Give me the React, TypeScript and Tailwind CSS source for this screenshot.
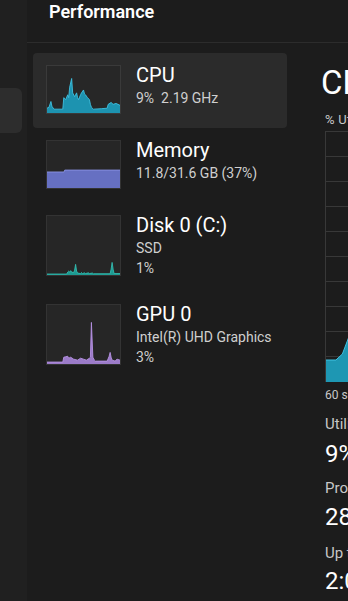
import React from "react";

type Pt = [number, number];

/* ── tiny sparkline used in the left list ───────────────────── */
function Spark({
  h,
  pts,
  fill,
  stroke,
  className,
}: {
  h: number;
  pts: Pt[];
  fill: string;
  stroke: string;
  className: string;
}) {
  const area = [...pts, [74, h] as Pt, [0, h] as Pt].map((p) => p.join(",")).join(" ");
  const line = pts.map((p) => p.join(",")).join(" ");
  return (
    <div className={className}>
      <svg viewBox={`0 0 74 ${h}`} preserveAspectRatio="none" className="block h-full w-full">
        <polygon points={area} fill={fill} />
        <polyline points={line} fill="none" stroke={stroke} strokeWidth="0.9" />
      </svg>
    </div>
  );
}

const CPU_PTS: Pt[] = [
  [0, 44], [2, 43], [4, 37], [5, 42], [7, 45], [16, 45], [17, 33], [19, 35], [21, 30], [22, 33],
  [23, 22], [25, 13], [26, 28], [28, 32], [30, 28], [31, 33], [32, 35], [34, 30], [35, 28], [37, 25],
  [38, 29], [39, 30], [41, 33], [43, 35], [44, 40], [45, 43], [47, 45], [55, 44.5], [61, 44], [62, 40],
  [65, 38], [67, 40], [70, 39], [72, 40], [74, 41],
];

const MEM_PTS: Pt[] = [[0, 32.3], [17.3, 32.3], [18, 30.3], [74, 30.3]];

const DISK_PTS: Pt[] = [
  [0, 60], [20, 60], [21, 58], [22, 57], [23, 58], [24, 56.5], [25, 58], [27, 58.5], [28, 56], [29, 50],
  [30, 57], [31, 59], [34, 59.5], [35, 58.5], [36, 59.5], [38, 58.8], [39, 59.5], [42, 58.8], [43, 59.5],
  [46, 59], [47, 59.7], [64, 59.7], [65, 55], [66, 48], [67, 55], [68, 59.5], [74, 59.5],
];

const GPU_PTS: Pt[] = [
  [0, 59], [16, 59], [17, 54], [19, 53.5], [21, 53], [22, 55], [24, 54], [27, 56], [31, 57], [34, 55],
  [37, 56], [40, 57], [43, 55], [44, 54], [45, 18], [46.5, 54], [48, 57], [49, 58], [61, 58], [63, 53],
  [64, 49], [65, 54], [66, 57], [69, 58], [71, 56], [74, 57],
];

function Label({ title, lines }: { title: string; lines: string[] }) {
  return (
    <div className="min-w-0">
      <div className="text-[20px] leading-none text-white">{title}</div>
      <div className="mt-[3px] text-[14px] leading-[20px] text-[#cfcfcf]">
        {lines.map((l) => (
          <div key={l} className="whitespace-pre">
            {l}
          </div>
        ))}
      </div>
    </div>
  );
}

export default function App() {
  return (
    <div
      className="flex h-[601px] w-[348px] overflow-hidden bg-[#1c1c1c]"
      style={{ fontFamily: "Roboto, 'Open Sans', sans-serif" }}
    >
      {/* nav rail */}
      <aside className="w-[27px] shrink-0 bg-[#202020] pt-[88px]">
        <div className="h-[45px] w-[22px] rounded-r-md bg-[#2d2d2d]" />
      </aside>

      <main className="flex min-w-0 flex-1 flex-col">
        <header className="h-[43px] shrink-0 border-b border-[#2c2c2c] pl-[22px] pt-[3px]">
          <h1 className="text-[18px] font-semibold leading-none text-white">Performance</h1>
        </header>

        <div className="flex">
          {/* device list */}
          <div className="w-[260px] shrink-0 pl-[6px] pt-[10px]">
            <div className="flex w-[254px] gap-[15px] rounded-[4px] bg-[#2b2b2b] pb-[14px] pl-[13px] pt-[12px]">
              <Spark
                h={49}
                pts={CPU_PTS}
                fill="#1d93b0"
                stroke="#3fc2e2"
                className="h-[49px] w-[75px] shrink-0 border border-[#3a3a3a] bg-[#272727]"
              />
              <Label title="CPU" lines={["9%  2.19 GHz"]} />
            </div>

            <div className="flex w-[254px] gap-[15px] pb-[14px] pl-[13px] pt-[12px]">
              <Spark
                h={49}
                pts={MEM_PTS}
                fill="#6670c2"
                stroke="#8d95e6"
                className="h-[49px] w-[75px] shrink-0 border border-[#333333] bg-[#262626]"
              />
              <Label title="Memory" lines={["11.8/31.6 GB (37%)"]} />
            </div>

            <div className="flex w-[254px] gap-[15px] pb-[14px] pl-[13px] pt-[12px]">
              <Spark
                h={61}
                pts={DISK_PTS}
                fill="#1d9b92"
                stroke="#34bcb1"
                className="h-[61px] w-[75px] shrink-0 border border-[#333333] bg-[#262626]"
              />
              <Label title="Disk 0 (C:)" lines={["SSD", "1%"]} />
            </div>

            <div className="flex w-[254px] gap-[15px] pb-[14px] pl-[13px] pt-[12px]">
              <Spark
                h={61}
                pts={GPU_PTS}
                fill="#9b7bc8"
                stroke="#b893e6"
                className="h-[61px] w-[75px] shrink-0 border border-[#333333] bg-[#262626]"
              />
              <Label title="GPU 0" lines={["Intel(R) UHD Graphics", "3%"]} />
            </div>
          </div>

          {/* detail pane, clipped by the window edge */}
          <section className="ml-[38px] w-[320px] shrink-0">
            <div className="-ml-[4px] mt-[23px] text-[33px] leading-none text-white">CPU</div>
            <div className="mt-[14px] text-[13px] leading-none tracking-[0.3px] text-[#c8c8c8]">% Utilization</div>

            <div className="relative mt-[5px] w-[300px] border-x border-t border-[#383838]">
              {Array.from({ length: 10 }).map((_, i) => (
                <div key={i} className="h-[25px] border-b border-[#383838]" />
              ))}
              <svg
                viewBox="0 0 300 250"
                preserveAspectRatio="none"
                className="absolute left-0 top-0 h-[250px] w-full"
              >
                <polygon
                  points="0,228 10,228 16.5,222 23,205 30,188 36,180 300,180 300,250 0,250"
                  fill="#1e97b3"
                />
                <polyline
                  points="0,228 10,228 16.5,222 23,205 30,188 36,180"
                  fill="none"
                  stroke="#3fc2e2"
                  strokeWidth="1"
                />
              </svg>
            </div>

            <div className="mt-[7px] text-[12px] leading-none text-[#c8c8c8]">60 seconds</div>

            <div className="mt-[16px] text-[15px] leading-none text-[#c8c8c8]">Utilization</div>
            <div className="mt-[10px] text-[24px] leading-none text-white">9%</div>

            <div className="mt-[15px] text-[15px] leading-none text-[#c8c8c8]">Processes</div>
            <div className="mt-[9px] text-[24px] leading-none text-white">284</div>

            <div className="mt-[17px] text-[15px] leading-none text-[#c8c8c8]">Up time</div>
            <div className="mt-[8px] text-[24px] leading-none text-white">2:03:41:17</div>
          </section>
        </div>
      </main>
    </div>
  );
}
